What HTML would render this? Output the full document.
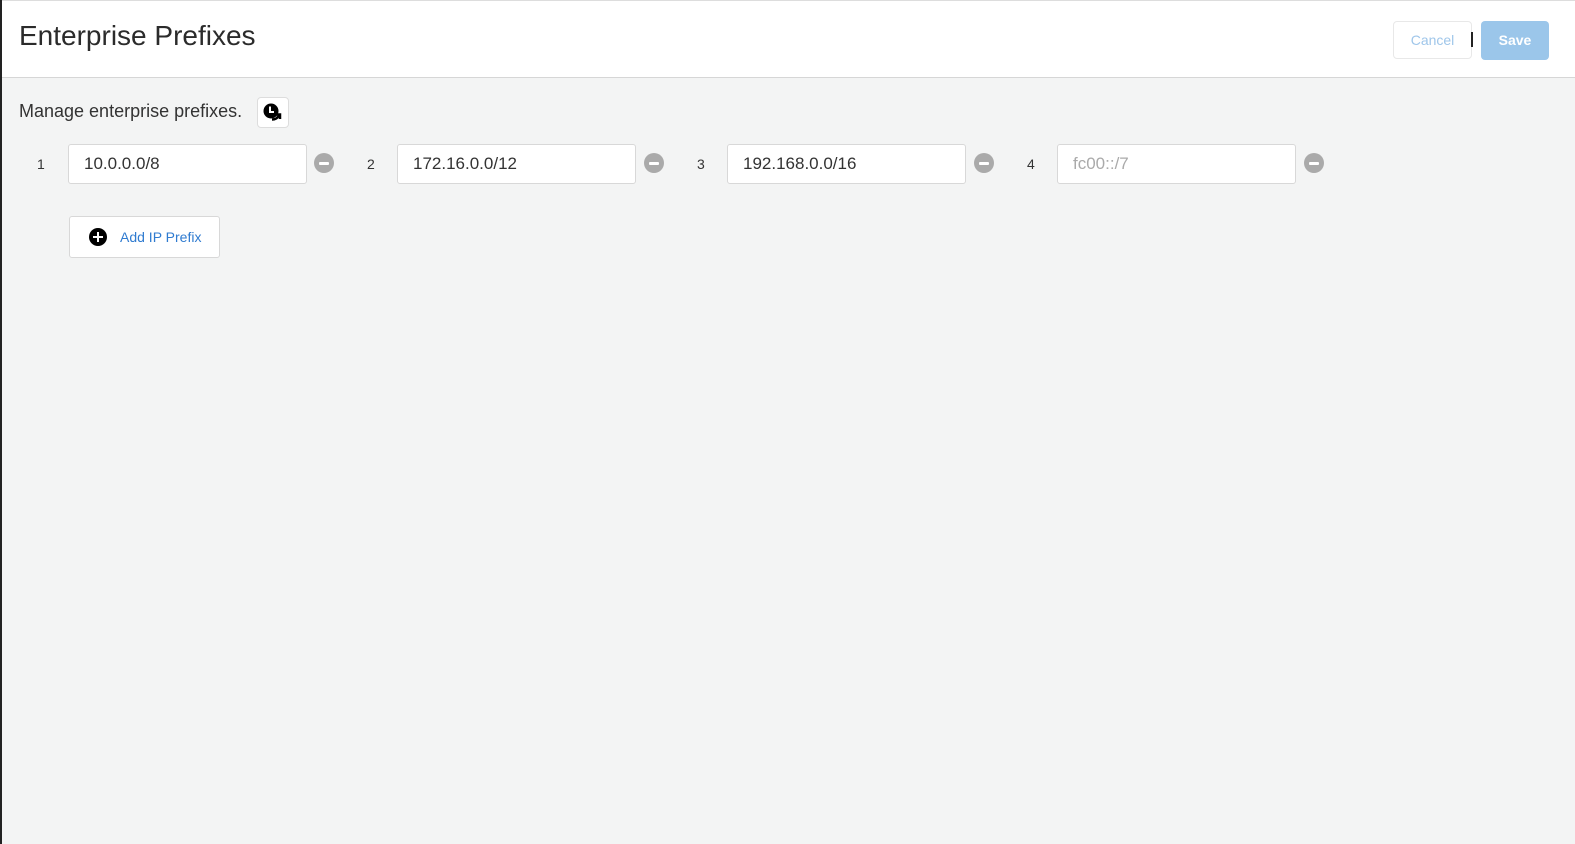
<!DOCTYPE html>
<html><head><meta charset="utf-8"><style>
*{box-sizing:border-box;margin:0;padding:0}
body{width:1575px;height:844px;overflow:hidden;background:#f3f4f4;font-family:"Liberation Sans",sans-serif;position:relative}
.lb{position:absolute;left:0;top:0;width:2px;height:844px;background:#222;z-index:5}
.hdr{position:absolute;left:0;top:0;width:1575px;height:78px;background:#fff;border-top:1px solid #ddd;border-bottom:1px solid #d6d6d6}
.title{position:absolute;left:19px;top:19px;font-size:28px;color:#2b2b2b}
.cancel{position:absolute;left:1393px;top:20px;width:79px;height:38px;border:1px solid #e8e8e8;border-radius:4px;color:#9fc6ea;font-size:14px;text-align:center;line-height:36px;background:#fff}
.bar{position:absolute;left:1471px;top:31px;width:2px;height:15px;background:#222}
.save{position:absolute;left:1481px;top:20px;width:68px;height:39px;border-radius:4px;background:#9bc6ea;color:#fff;font-weight:bold;font-size:14px;text-align:center;line-height:38px}
.manage{position:absolute;left:19px;top:101px;font-size:18px;color:#333}
.ib{position:absolute;left:257px;top:97px;width:32px;height:31px;background:#fff;border:1px solid #ddd;border-radius:4px}
.ib svg{position:absolute;left:0;top:0}
.num{position:absolute;top:156px;font-size:14px;color:#333}
.inp{position:absolute;top:144px;width:239px;height:40px;background:#fff;border:1px solid #d8d8d8;border-radius:3px;font-size:17px;color:#333;padding-left:15px;line-height:38px}
.min{position:absolute;top:153px;width:20px;height:20px;border-radius:50%;background:#aaa}
.min:after{content:"";position:absolute;left:5px;top:9px;width:10px;height:2.5px;background:#fff;border-radius:1px}
.add{position:absolute;left:69px;top:216px;width:151px;height:42px;background:#fff;border:1px solid #d8d8d8;border-radius:3px}
.add .c{position:absolute;left:19px;top:11px;width:18px;height:18px;border-radius:50%;background:#000}
.add .c:before{content:"";position:absolute;left:4px;top:8px;width:10px;height:2px;background:#fff}
.add .c:after{content:"";position:absolute;left:8px;top:4px;width:2px;height:10px;background:#fff}
.add span{position:absolute;left:50px;top:12px;font-size:14px;color:#2f7bd0}
</style></head><body>
<div class="lb"></div>
<div class="hdr">
<div class="title">Enterprise Prefixes</div>
<div class="cancel">Cancel</div><div class="bar"></div><div class="save">Save</div>
</div>
<div class="manage">Manage enterprise prefixes.</div>
<div class="ib"><svg width="30" height="29" viewBox="0 0 30 29"><circle cx="13" cy="13" r="7.5" fill="#000"/><path d="M12 8.5v5.5h4" stroke="#fff" stroke-width="2" fill="none"/><path d="M14 21.5c3 0 6-1.5 7-4.5" stroke="#000" stroke-width="2.5" fill="none"/><path d="M17.5 16.5h4.5v4.5" stroke="#000" stroke-width="2.5" fill="none"/></svg></div>
<div class="num" style="left:37px">1</div><div class="inp" style="left:68px">10.0.0.0/8</div><div class="min" style="left:314px"></div>
<div class="num" style="left:367px">2</div><div class="inp" style="left:397px">172.16.0.0/12</div><div class="min" style="left:644px"></div>
<div class="num" style="left:697px">3</div><div class="inp" style="left:727px">192.168.0.0/16</div><div class="min" style="left:974px"></div>
<div class="num" style="left:1027px">4</div><div class="inp" style="left:1057px;color:#aaa">fc00::/7</div><div class="min" style="left:1304px"></div>
<div class="add"><div class="c"></div><span>Add IP Prefix</span></div>
</body></html>
